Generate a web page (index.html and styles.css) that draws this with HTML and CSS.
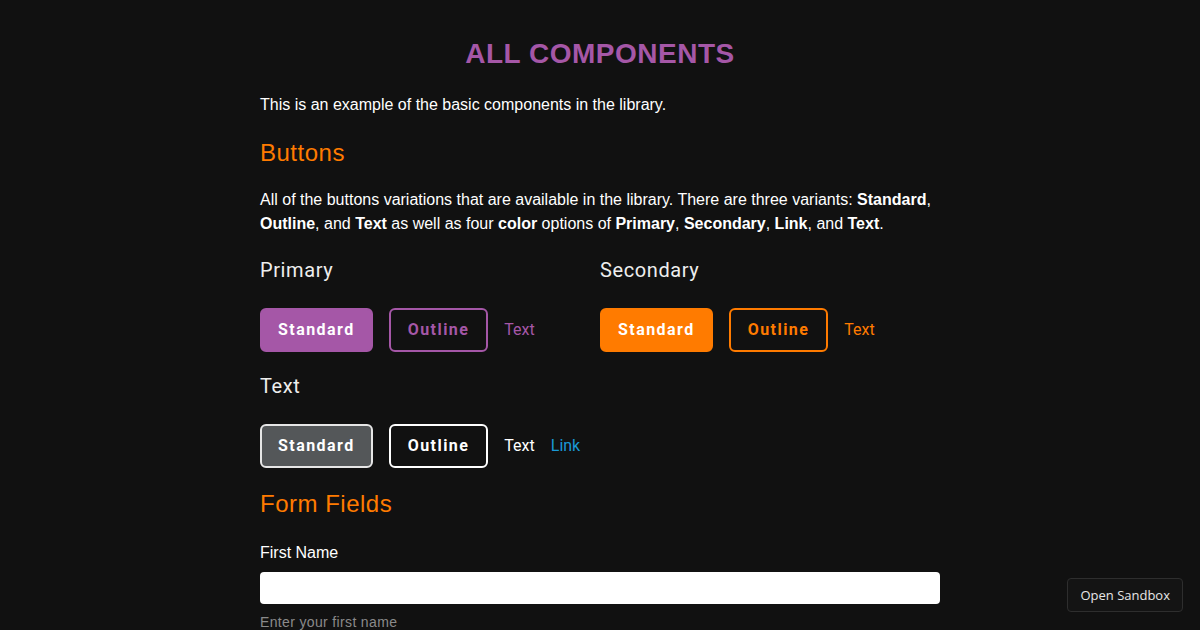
FILE: index.html
```html
<!DOCTYPE html>
<html lang="en">
<head>
<meta charset="utf-8">
<title>All Components</title>
<link rel="stylesheet" href="styles.css">
</head>
<body>
<main class="page">
  <h1 class="title">ALL COMPONENTS</h1>
  <p class="intro">This is an example of the basic components in the library.</p>

  <h2 class="section">Buttons</h2>
  <p class="desc">All of the buttons variations that are available in the library. There are three variants: <b>Standard</b>, <b>Outline</b>, and <b>Text</b> as well as four <b>color</b> options of <b>Primary</b>, <b>Secondary</b>, <b>Link</b>, and <b>Text</b>.</p>

  <div class="groups">
    <div class="group">
      <h3 class="group-title">Primary</h3>
      <div class="btn-row">
        <button class="btn btn-standard primary">Standard</button>
        <button class="btn btn-outline primary">Outline</button>
        <button class="btn btn-text primary">Text</button>
      </div>
    </div>
    <div class="group">
      <h3 class="group-title">Secondary</h3>
      <div class="btn-row">
        <button class="btn btn-standard secondary">Standard</button>
        <button class="btn btn-outline secondary">Outline</button>
        <button class="btn btn-text secondary">Text</button>
      </div>
    </div>
    <div class="group">
      <h3 class="group-title">Text</h3>
      <div class="btn-row">
        <button class="btn btn-standard neutral">Standard</button>
        <button class="btn btn-outline neutral">Outline</button>
        <button class="btn btn-text neutral">Text</button>
        <button class="btn btn-text link">Link</button>
      </div>
    </div>
  </div>

  <h2 class="section section-form">Form Fields</h2>
  <div class="field">
    <label class="field-label" for="first">First Name</label>
    <input class="field-input" id="first" type="text">
    <div class="field-help">Enter your first name</div>
  </div>
</main>
<button class="sandbox">Open Sandbox</button>
</body>
</html>
```

FILE: styles.css
```css
html, body {
  margin: 0;
  padding: 0;
  background: #111111;
}

body {
  font-family: "Liberation Sans", Arial, sans-serif;
  color: #ffffff;
  overflow: hidden;
}

.page {
  width: 680px;
  margin: 0 auto;
  padding-top: 37px;
}

.title {
  margin: 0;
  font-size: 28px;
  line-height: 34px;
  font-weight: 700;
  letter-spacing: 0.5px;
  text-align: center;
  color: #a557a7;
}

.intro {
  margin: 22px 0 0;
  font-size: 16px;
  line-height: 24px;
}

.section {
  margin: 21px 0 0;
  font-size: 24px;
  line-height: 29px;
  font-weight: 400;
  letter-spacing: 0.5px;
  color: #ff7b00;
}

.desc {
  margin: 21px 0 0;
  font-size: 16px;
  line-height: 24px;
}

.desc b {
  font-weight: 700;
}

.groups {
  display: grid;
  grid-template-columns: 340px 340px;
  row-gap: 22px;
  margin-top: 22px;
}

.group-title {
  margin: 0;
  font-family: Roboto, "Liberation Sans", sans-serif;
  font-size: 20px;
  line-height: 24px;
  font-weight: 400;
  letter-spacing: 0.6px;
  color: #eeeeee;
}

.btn-row {
  display: flex;
  align-items: center;
  gap: 16px;
  margin-top: 26px;
  height: 44px;
}

.btn {
  font-family: Roboto, "Liberation Sans", sans-serif;
  font-size: 16px;
  box-sizing: border-box;
  background: transparent;
  margin: 0;
  cursor: pointer;
}

.btn-standard, .btn-outline {
  height: 44px;
  padding: 0 16px;
  border: 2px solid transparent;
  border-radius: 6px;
  font-weight: 700;
  letter-spacing: 1.45px;
  line-height: 40px;
}

.btn-outline {
  padding: 0 17px;
}

.btn-text {
  border: 0;
  padding: 0;
  font-weight: 400;
  line-height: 20px;
}

.btn-standard.primary {
  background: #a557a7;
  border-color: #a557a7;
  color: #ffffff;
}
.btn-outline.primary {
  border-color: #a557a7;
  color: #a557a7;
}
.btn-text.primary {
  color: #a557a7;
}

.btn-standard.secondary {
  background: #ff7b00;
  border-color: #ff7b00;
  color: #ffffff;
}
.btn-outline.secondary {
  border-color: #ff7b00;
  color: #ff7b00;
}
.btn-text.secondary {
  color: #ff7b00;
}

.btn-standard.neutral {
  background: #545759;
  border-color: #e6e6e6;
  color: #ffffff;
}
.btn-outline.neutral {
  border-color: #ffffff;
  color: #ffffff;
}
.btn-text.neutral {
  color: #ffffff;
}
.btn-text.link {
  color: #1a9ad6;
}

.section-form {
  margin-top: 21px;
}

.field {
  display: flex;
  flex-direction: column;
  margin-top: 23px;
}

.field-label {
  font-size: 16px;
  line-height: 24px;
  color: #ffffff;
}

.field-input {
  box-sizing: border-box;
  margin-top: 7px;
  width: 680px;
  height: 32px;
  border: 0;
  border-radius: 4px;
  background: #ffffff;
  outline: none;
}

.field-help {
  margin-top: 8px;
  font-size: 14px;
  line-height: 20px;
  letter-spacing: 0.35px;
  color: #8a8a8a;
}

.sandbox {
  position: fixed;
  right: 17px;
  bottom: 18px;
  height: 34px;
  padding: 0 12px;
  box-sizing: border-box;
  background: #141414;
  border: 1px solid #2e2e2e;
  border-radius: 4px;
  color: #e6e6e6;
  font-family: "Open Sans", "Noto Sans", sans-serif;
  font-size: 13px;
  font-weight: 500;
}
```
